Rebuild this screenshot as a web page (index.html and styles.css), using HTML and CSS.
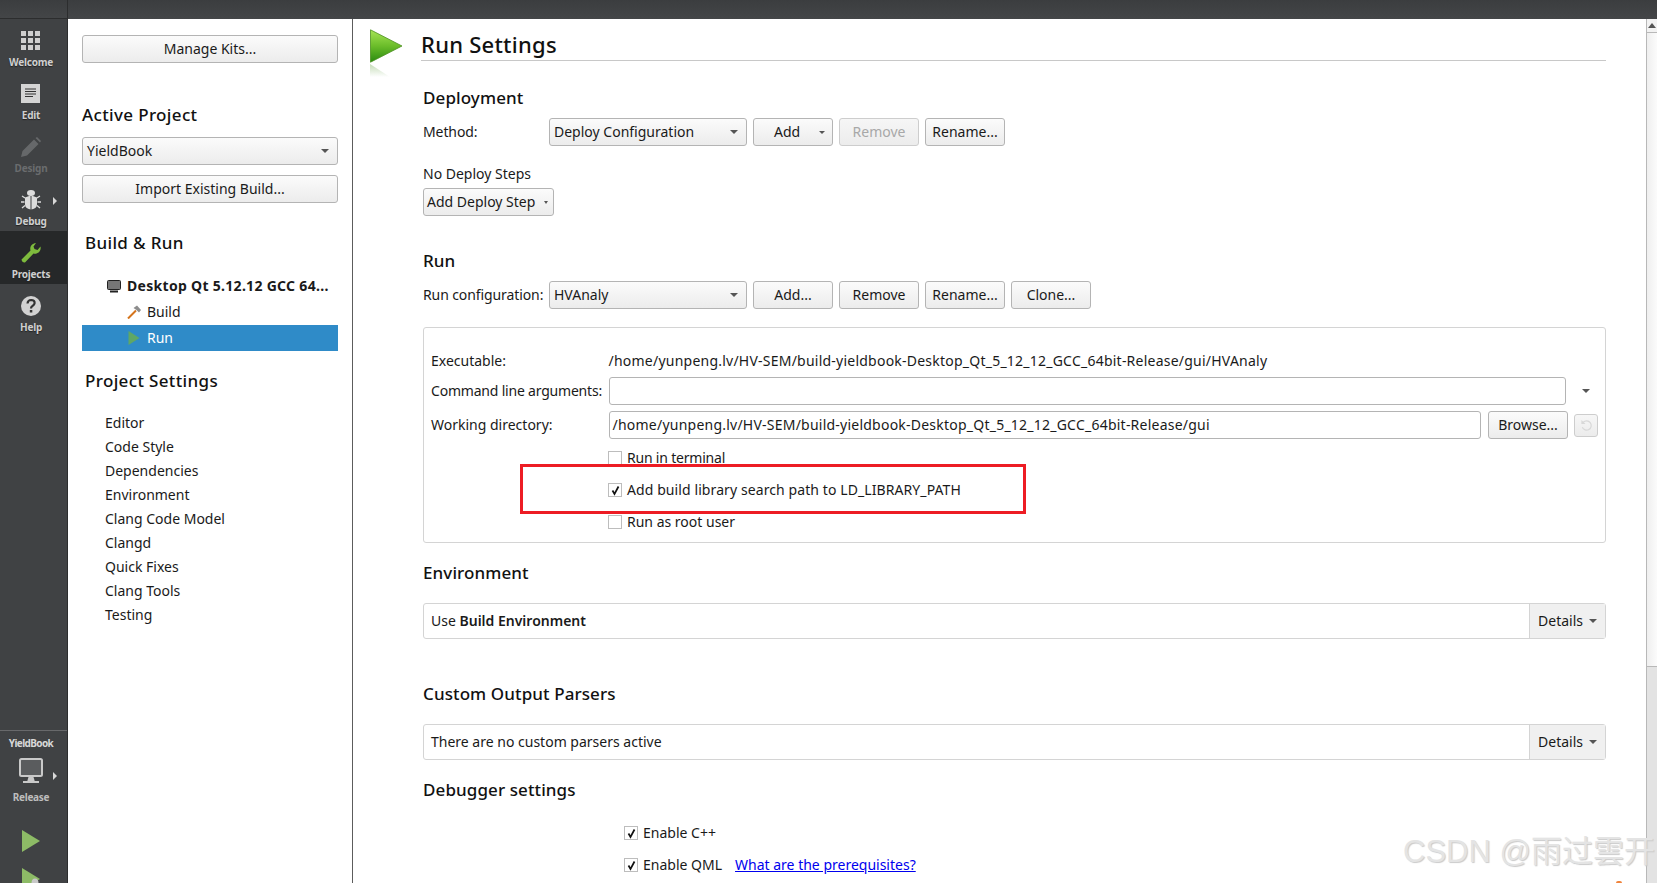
FILE: index.html
```html
<!DOCTYPE html>
<html lang="en">
<head>
<meta charset="utf-8">
<title>Run Settings</title>
<link rel="stylesheet" href="styles.css">
</head>
<body>
<div class="app">
  <div class="topbar"><div class="topbar-corner"></div></div>
  <div class="workspace">
    <nav class="nav">
      <div class="nav-item">
        <svg class="nav-icon" viewBox="0 0 20 20"><g fill="#cfcfcf"><rect x="0" y="0" width="5" height="5"/><rect x="7" y="0" width="5" height="5"/><rect x="14" y="0" width="5" height="5"/><rect x="0" y="7" width="5" height="5"/><rect x="7" y="7" width="5" height="5"/><rect x="14" y="7" width="5" height="5"/><rect x="0" y="14" width="5" height="5"/><rect x="7" y="14" width="5" height="5"/><rect x="14" y="14" width="5" height="5"/></g></svg>
        <span class="nav-label">Welcome</span>
      </div>
      <div class="nav-item">
        <svg class="nav-icon" viewBox="0 0 20 20"><rect x="0" y="0" width="19" height="19" fill="#d4d4d4"/><path d="M4 5h11M4 7.500h11M4 10h11M4 12.500h8" stroke="#333" stroke-width="1" fill="none"/></svg>
        <span class="nav-label">Edit</span>
      </div>
      <div class="nav-item">
        <svg class="nav-icon" viewBox="0 0 20 20"><path d="M0 20l1.500-6L13 2.500l4.500 4.500L6 18.500zM14.500 1l1.500-1 4 4-1 1.500z" fill="#66686a"/></svg>
        <span class="nav-label nav-label-dim">Design</span>
      </div>
      <div class="nav-item">
        <svg class="nav-icon" viewBox="0 0 20 20"><g fill="#dcdcdc"><ellipse cx="10" cy="3" rx="4" ry="3"/><path d="M9.500 5.500L4 7.500v7q0 4 5.500 5zM10.500 5.500L16 7.500v7q0 4-5.500 5z"/></g><path d="M4 8L1 6M3.500 12H0M4 15.500L1 18M16 8l3-2M16.500 12H20M16 15.500l3 2.500" stroke="#dcdcdc" stroke-width="1.300" fill="none"/></svg>
        <span class="nav-label">Debug</span>
        <span class="nav-arrow"></span>
      </div>
      <div class="nav-item nav-item-active">
        <svg class="nav-icon" viewBox="0 0 20 20"><path d="M0.500 16.500L9.500 7.500C8.500 4 10.500 .5 15 0L12.500 3.500 13.500 6 16.500 7 19.500 3.500C20.500 8 16.500 11.500 12.500 10.500L4 19.500Q1 19.800 .5 16.500z" fill="#7ebb3d"/></svg>
        <span class="nav-label">Projects</span>
      </div>
      <div class="nav-item">
        <svg class="nav-icon" viewBox="0 0 20 20"><circle cx="10" cy="10" r="10" fill="#d2d2d2"/><path d="M6.500 7.500Q6.800 4 10.200 4 13.800 4.200 13.600 7.200 13.400 9 11.500 10 10 10.800 10 12.500" fill="none" stroke="#333" stroke-width="2.200"/><rect x="8.800" y="14" width="2.500" height="2.500" fill="#333"/></svg>
        <span class="nav-label">Help</span>
      </div>
      <div class="nav-kit">
        <span class="kit-project">YieldBook</span>
        <svg class="kit-monitor" viewBox="0 0 24 26"><rect x="1" y="1" width="22" height="17" rx="1.500" fill="#5a5c5e" stroke="#c9c9c9" stroke-width="2"/><path d="M9.500 19h5l1.500 5H8z" fill="#c9c9c9"/><rect x="4" y="23" width="16" height="2" fill="#c9c9c9"/></svg>
        <span class="nav-arrow nav-arrow-kit"></span>
        <span class="kit-build">Release</span>
        <svg class="kit-run" viewBox="0 0 18 22"><path d="M0 0l18 11L0 22z" fill="#8dbb66"/></svg>
        <svg class="kit-run kit-run-debug" viewBox="0 0 18 22"><path d="M0 0l18 11L0 22z" fill="#8dbb66"/><ellipse cx="13" cy="15" rx="3.500" ry="4.500" fill="#c9c9c9"/></svg>
      </div>
    </nav>

    <aside class="side">
      <button class="btn btn-wide">Manage Kits...</button>
      <h2 class="side-heading side-active">Active Project</h2>
      <div class="btn combo combo-project"><span>YieldBook</span><i class="caret"></i></div>
      <button class="btn btn-wide side-import">Import Existing Build...</button>
      <h2 class="side-heading side-build">Build &amp; Run</h2>
      <div class="kit-row">
        <svg class="kit-row-icon" viewBox="0 0 14 13"><rect x="0.500" y="0.500" width="13" height="9" rx="1" fill="#777" stroke="#222"/><rect x="3" y="10.500" width="8" height="2" fill="#222"/></svg>
        <b>Desktop Qt 5.12.12 GCC 64...</b>
      </div>
      <div class="target-row">
        <svg class="target-icon" viewBox="0 0 14 14"><path d="M1 13.500L9 5.500" stroke="#d5741c" stroke-width="2"/><path d="M6.500 3L10 .5 14 5 12 7.500 9.500 5z" fill="#8d8d8d"/></svg>
        <span>Build</span>
      </div>
      <div class="target-row target-row-selected">
        <svg class="target-icon" viewBox="0 0 14 14"><path d="M1.500 0l11 7-11 7z" fill="#5fa765"/></svg>
        <span>Run</span>
      </div>
      <h2 class="side-heading side-settings">Project Settings</h2>
      <ul class="settings-list">
        <li>Editor</li>
        <li>Code Style</li>
        <li>Dependencies</li>
        <li>Environment</li>
        <li>Clang Code Model</li>
        <li>Clangd</li>
        <li>Quick Fixes</li>
        <li>Clang Tools</li>
        <li>Testing</li>
      </ul>
    </aside>

    <main class="main">
      <div class="content">
        <header class="page-head">
          <svg class="page-icon" viewBox="0 0 33 48">
            <defs>
              <linearGradient id="playFill" x1="0" y1="0" x2="0" y2="1"><stop offset="0" stop-color="#a6e455"/><stop offset="0.500" stop-color="#6bbd2a"/><stop offset="1" stop-color="#2a8a10"/></linearGradient>
              <linearGradient id="playShade" x1="0" y1="0" x2="0" y2="1"><stop offset="0" stop-color="#c5dcb8"/><stop offset="1" stop-color="#ffffff"/></linearGradient>
            </defs>
            <path d="M.5 .8L32 17 .5 33.200z" fill="url(#playFill)" stroke="#4d8f22" stroke-width=".8"/>
            <path d="M0 35l20 13H0z" fill="url(#playShade)"/>
          </svg>
          <h1 class="page-title">Run Settings</h1>
        </header>

        <section class="section">
          <h3 class="heading heading-deploy">Deployment</h3>
          <div class="row row-method">
            <span class="row-label">Method:</span>
            <div class="btn combo combo-config"><span>Deploy Configuration</span><i class="caret"></i></div>
            <button class="btn btn-menu"><span>Add</span><i class="caret caret-small"></i></button>
            <button class="btn btn-action" disabled>Remove</button>
            <button class="btn btn-action">Rename...</button>
          </div>
          <p class="note">No Deploy Steps</p>
          <button class="btn btn-step"><span>Add Deploy Step</span><i class="caret caret-tiny"></i></button>

          <h3 class="heading heading-run">Run</h3>
          <div class="row row-run">
            <span class="row-label">Run configuration:</span>
            <div class="btn combo combo-config"><span>HVAnaly</span><i class="caret"></i></div>
            <button class="btn btn-action">Add...</button>
            <button class="btn btn-action">Remove</button>
            <button class="btn btn-action">Rename...</button>
            <button class="btn btn-action">Clone...</button>
          </div>

          <div class="panel">
            <div class="field field-exec"><span class="field-label">Executable:</span><span class="path">/home/yunpeng.lv/HV-SEM/build-yieldbook-Desktop_Qt_5_12_12_GCC_64bit-Release/gui/HVAnaly</span></div>
            <div class="field field-input"><span class="field-label field-label-tight">Command line arguments:</span><div class="input"></div><div class="history"><i class="caret"></i></div></div>
            <div class="field field-input"><span class="field-label">Working directory:</span><div class="input path">/home/yunpeng.lv/HV-SEM/build-yieldbook-Desktop_Qt_5_12_12_GCC_64bit-Release/gui</div><button class="btn btn-browse">Browse...</button><button class="btn btn-revert" disabled><svg viewBox="0 0 14 14"><path d="M3.500 3.500A5 5 0 1 1 2.500 9" fill="none" stroke="#d8d8d8" stroke-width="1.300"/><path d="M1.500 1v4.500h4.500z" fill="#d8d8d8"/></svg></button></div>
            <label class="check check-first"><i class="box"></i>Run in terminal</label>
            <label class="check check-next"><i class="box box-on"><svg viewBox="0 0 11 11"><path d="M2.500 5.500L4.500 9 8.500 1.500" fill="none" stroke="#111" stroke-width="1.700"/></svg></i><span class="check-wide">Add build library search path to LD_LIBRARY_PATH</span></label>
            <label class="check check-next"><i class="box"></i>Run as root user</label>
            <div class="annotation"></div>
          </div>

          <h3 class="heading heading-env">Environment</h3>
          <div class="details-bar heading-gap">
            <span class="details-text">Use <b>Build Environment</b></span>
            <div class="details-btn"><span>Details</span><i class="caret"></i></div>
          </div>

          <h3 class="heading heading-parsers">Custom Output Parsers</h3>
          <div class="details-bar heading-gap">
            <span class="details-text">There are no custom parsers active</span>
            <div class="details-btn"><span>Details</span><i class="caret"></i></div>
          </div>

          <h3 class="heading heading-debugger">Debugger settings</h3>
          <div class="debug-options">
            <label class="check"><i class="box box-on"><svg viewBox="0 0 11 11"><path d="M2.500 5.500L4.500 9 8.500 1.500" fill="none" stroke="#111" stroke-width="1.700"/></svg></i>Enable C++</label>
            <label class="check check-qml"><i class="box box-on"><svg viewBox="0 0 11 11"><path d="M2.500 5.500L4.500 9 8.500 1.500" fill="none" stroke="#111" stroke-width="1.700"/></svg></i>Enable QML<a class="link" href="#">What are the prerequisites?</a></label>
          </div>
        </section>
      </div>
      <div class="scrollbar">
        <div class="scroll-up"><i></i></div>
        <div class="scroll-handle"></div>
        <div class="scroll-track"></div>
      </div>
    </main>
  </div>
  <div class="watermark">CSDN @雨过雲开</div>
  <div class="watermark-dot"></div>
</div>
</body>
</html>
```

FILE: styles.css
```css
* { box-sizing: border-box; }
html, body { margin: 0; padding: 0; height: 100%; overflow: hidden; background: #fff; }
body { font-family: "Noto Sans", "Open Sans", sans-serif; font-size: 14px; line-height: 20px; color: #1a1a1a; }
.app { position: relative; display: flex; flex-direction: column; width: 1657px; height: 883px; overflow: hidden; }

.topbar { height: 19px; flex: none; background: linear-gradient(#3b3d3f, #444648); }
.topbar-corner { width: 68px; height: 19px; border-right: 1px solid #2c2d2e; border-bottom: 1px solid #2c2d2e; }
.workspace { display: flex; flex: 1; min-height: 0; }

.nav { width: 68px; flex: none; background: #404244; border-right: 1px solid #2c2d2e; }
.nav-item { position: relative; height: 53px; padding-right: 5px; display: flex; flex-direction: column; align-items: center; }
.nav-item-active { background: #262829; }
.nav-icon { width: 20px; height: 20px; margin-top: 12px; flex: none; }
.nav-label { margin-top: 1px; font-size: 10px; font-weight: 700; letter-spacing: -.2px; line-height: 20px; color: #cfcfcf; text-shadow: 0 1px 1px #222; }
.nav-label-dim { color: #6a6c6e; text-shadow: none; }
.nav-arrow { position: absolute; left: 53px; top: 19px; border-left: 4px solid #d8d8d8; border-top: 4px solid transparent; border-bottom: 4px solid transparent; }
.nav-kit { position: relative; margin-top: 393px; padding-right: 5px; border-top: 1px solid #68696b; display: flex; flex-direction: column; align-items: center; }
.kit-project { margin-top: 2px; font-size: 10px; font-weight: 700; letter-spacing: -.6px; line-height: 20px; color: #d8d8d8; }
.kit-monitor { width: 24px; height: 26px; margin-top: 5px; }
.nav-arrow-kit { top: 41px; }
.kit-build { margin-top: 3px; font-size: 10px; font-weight: 700; letter-spacing: -.3px; line-height: 20px; color: #bdbdbd; }
.kit-run { width: 18px; height: 22px; margin-top: 23px; flex: none; }
.kit-run-debug { margin-top: 16px; }

.side { width: 285px; flex: none; padding: 16px 14px 0; border-right: 1px solid #5c5c5c; }
.side-heading { margin: 0; font-size: 17px; font-weight: 500; letter-spacing: .35px; line-height: 20px; color: #111; }
.side-active { margin-top: 42px; }
.side-build { margin-top: 30px; padding-left: 3px; }
.side-settings { margin-top: 20px; padding-left: 3px; }

.btn { display: flex; align-items: center; height: 28px; margin: 0; padding: 0; border: 1px solid #b4b4b4; border-radius: 3px; background: linear-gradient(#fbfbfb, #ececec); font: inherit; color: #1a1a1a; justify-content: center; }
.btn[disabled] { color: #a8a8a8; border-color: #cdcdcd; background: linear-gradient(#f6f6f6, #ececec); }
.btn-wide { width: 256px; }
.btn.side-import { margin-top: 10px; }
.combo { justify-content: space-between; padding: 0 8px 0 4px; }
.combo-project { margin-top: 12px; width: 256px; }
.combo-config { width: 198px; flex: none; }
.caret { display: block; width: 0; height: 0; border-top: 4px solid #555; border-left: 4.500px solid transparent; border-right: 4.500px solid transparent; }
.caret-small { border-top-width: 3px; border-left-width: 3.500px; border-right-width: 3.500px; }
.caret-tiny { border-top-width: 3px; border-left-width: 2.500px; border-right-width: 2.500px; }

.kit-row { display: flex; align-items: center; height: 24px; margin-top: 21px; padding-left: 25px; white-space: nowrap; font-size: 14px; }
.kit-row b { font-weight: 700; margin-left: 6px; letter-spacing: .3px; }
.kit-row-icon { width: 14px; height: 13px; flex: none; }
.target-row { display: flex; align-items: center; height: 26px; margin-top: 1px; padding-left: 45px; }
.target-row-selected { margin-top: 0; background: #2f8bc8; color: #fff; }
.target-icon { width: 14px; height: 14px; margin-right: 6px; flex: none; }
.settings-list { list-style: none; margin: 20px 0 0; padding: 0 0 0 23px; }
.settings-list li { height: 24px; line-height: 24px; }

.main { flex: 1; display: flex; min-width: 0; }
.content { flex: 1; min-width: 0; padding: 10px 40px 0 17px; }
.page-head { display: flex; height: 48px; }
.page-icon { width: 33px; height: 48px; flex: none; }
.page-title { flex: 1; height: 32px; margin: 0 0 0 18px; border-bottom: 1px solid #c8c8c8; font-size: 22px; font-weight: 500; letter-spacing: .25px; line-height: 30px; color: #111; }
.section { margin-left: 53px; }

.heading { margin: 0; font-size: 17px; font-weight: 500; letter-spacing: .1px; line-height: 20px; color: #111; }
.heading-deploy { margin-top: 11px; }
.heading-run { margin-top: 35px; }
.heading-env { margin-top: 20px; }
.heading-parsers { margin-top: 45px; }
.heading-debugger { margin-top: 20px; }
.heading-gap { margin-top: 20px; }

.row { display: flex; align-items: center; gap: 6px; }
.row-method { margin-top: 10px; }
.row-run { margin-top: 10px; }
.row-label { width: 120px; flex: none; white-space: nowrap; letter-spacing: -.1px; }
.btn-menu { width: 80px; justify-content: space-between; padding: 0 7px 0 20px; }
.btn-action { width: 80px; }
.note { margin: 18px 0 0; }
.btn-step { margin-top: 4px; width: 131px; justify-content: space-between; padding: 0 5px 0 3px; white-space: nowrap; }

.panel { position: relative; height: 216px; margin-top: 18px; padding: 23px 7px 0; border: 1px solid #d4d4d4; border-radius: 3px; }
.field { display: flex; align-items: center; white-space: nowrap; }
.field-input { height: 28px; margin-top: 6px; }
.field-label { width: 177.500px; flex: none; }
.field-label-tight { letter-spacing: -.2px; }
.path { letter-spacing: .23px; }
.input { flex: 1; height: 28px; padding: 0 3px; border: 1px solid #b4b4b4; border-radius: 3px; line-height: 26px; background: #fff; overflow: hidden; }
.history { width: 32px; flex: none; display: flex; justify-content: center; padding-left: 7px; }
.btn-browse { width: 80px; flex: none; margin-left: 7px; }
.btn-revert { width: 24px; height: 23px; flex: none; margin-left: 6px; }
.btn-revert svg { width: 13px; height: 13px; }
.check { display: flex; align-items: center; height: 20px; white-space: nowrap; }
.check-first { margin-top: 9px; padding-left: 177px; letter-spacing: -.2px; }
.check-next { margin-top: 12px; padding-left: 177px; }
.check-wide { letter-spacing: .09px; }
.box { display: flex; align-items: center; justify-content: center; width: 14px; height: 14px; flex: none; margin-right: 5px; border: 1px solid #bdbdbd; background: #fff; }
.box svg { width: 11px; height: 11px; }
.annotation { position: absolute; left: 96px; top: 136px; width: 506px; height: 50px; border: 3px solid #ed1c24; }

.details-bar { display: flex; align-items: stretch; height: 36px; border: 1px solid #d4d4d4; border-radius: 3px; }
.details-text { flex: 1; padding-left: 7px; line-height: 34px; }
.details-text b { font-weight: 600; }
.details-btn { width: 76px; display: flex; align-items: center; justify-content: center; gap: 6px; flex: none; background: #f0f0f0; border-left: 1px solid #d4d4d4; }

.debug-options { margin: 23px 0 0 201px; }
.check-qml { margin-top: 12px; }
.link { margin-left: 13px; color: #0000ee; text-decoration: underline; }

.scrollbar { width: 11px; flex: none; display: flex; flex-direction: column; border-left: 1px solid #b8b8b8; }
.scroll-up { height: 14px; flex: none; display: flex; align-items: center; justify-content: center; border-bottom: 1px solid #b8b8b8; background: #f2f2f2; }
.scroll-up i { display: block; border-bottom: 5px solid #555; border-left: 4px solid transparent; border-right: 4px solid transparent; }
.scroll-handle { height: 634px; flex: none; border-bottom: 1px solid #b8b8b8; background: linear-gradient(90deg, #efefef, #fbfbfb); }
.scroll-track { flex: 1; background: #e3e3e3; }

.watermark { position: absolute; left: 1403px; top: 832px; font-family: "Liberation Sans", "Noto Sans CJK SC", sans-serif; font-size: 31px; line-height: 40px; color: #e4e4e4; text-shadow: 1px 1px 1px #cacaca; white-space: nowrap; }
.watermark-dot { position: absolute; left: 1616px; top: 881px; width: 6px; height: 2px; background: #f0843c; border-radius: 3px 3px 0 0; }
```
